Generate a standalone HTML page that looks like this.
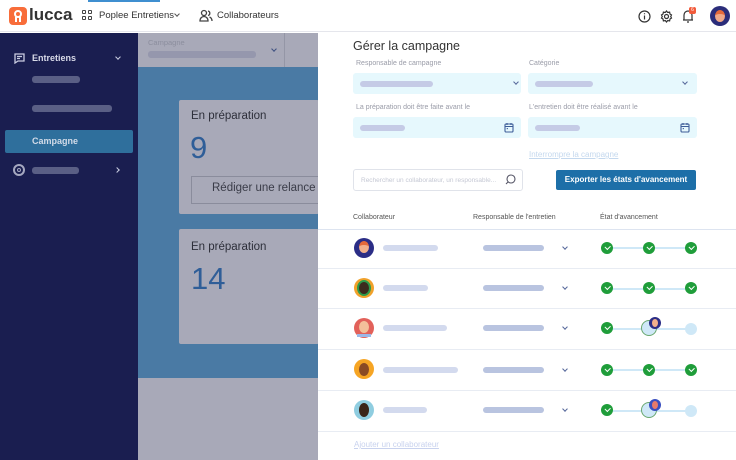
<!DOCTYPE html>
<html><head><meta charset="utf-8"><style>
*{margin:0;padding:0;box-sizing:border-box}
body{width:736px;height:460px;overflow:hidden;position:relative;font-family:"Liberation Sans",sans-serif;background:#fff}
.a{position:absolute}
.bar{position:absolute;border-radius:3px}
.lbl{position:absolute;font-size:7px;color:#9a9ca8}
.fld{position:absolute;background:#e6f8fd;border-radius:3px;height:21px}
.fld .bar{background:#c5cbe6;height:6px;top:8px;left:7px}
.chk{position:absolute;width:12px;height:12px;border-radius:50%;background:#1f9d3a}
.chk:after{content:"";position:absolute;left:3.5px;top:3px;width:4px;height:2.5px;border-left:1.5px solid #fff;border-bottom:1.5px solid #fff;transform:rotate(-45deg)}
.line{position:absolute;height:2px;background:#cfe8f7}
.pend{position:absolute;width:12px;height:12px;border-radius:50%;background:#cfe8f7}
.sep{position:absolute;left:318px;width:418px;height:1px;background:#e8ecf3}
.av{position:absolute;width:20px;height:20px;border-radius:50%}
.cv{position:absolute;width:4px;height:4px;border-right:1.2px solid #55679a;border-bottom:1.2px solid #55679a;transform:rotate(45deg)}
</style></head><body>
<!-- header -->
<div class="a" style="left:0;top:0;width:736px;height:32px;background:#fff;border-bottom:1px solid #e5e6ec"></div>
<div class="a" style="left:88px;top:0;width:72px;height:2px;background:#3f8fd0"></div>
<div class="a" style="left:9px;top:7px;width:18px;height:18px;border-radius:4px;background:#f86d3a"></div>
<div class="a" style="left:14px;top:10px;width:8px;height:8px;border:2px solid #fff;border-radius:50%"></div>
<div class="a" style="left:15px;top:17px;width:2px;height:5px;background:#fff"></div>
<div class="a" style="left:19px;top:17px;width:2px;height:5px;background:#fff"></div>
<div class="a" style="left:29px;top:5px;font-size:17px;font-weight:bold;color:#333">lucca</div>
<div class="a" style="left:82px;top:10px;width:11px;height:11px">
<div class="a" style="left:0;top:0;width:4px;height:4px;border:1.2px solid #444;border-radius:1px"></div>
<div class="a" style="left:6px;top:0;width:4px;height:4px;border:1.2px solid #444;border-radius:1px"></div>
<div class="a" style="left:0;top:6px;width:4px;height:4px;border:1.2px solid #444;border-radius:1px"></div>
<div class="a" style="left:6px;top:6px;width:4px;height:4px;border:1.2px solid #444;border-radius:1px"></div></div>
<div class="a" style="left:99px;top:10px;font-size:9.5px;color:#333">Poplee Entretiens</div>
<div class="cv" style="left:175px;top:12px;border-color:#555"></div>
<svg class="a" style="left:199px;top:9px" width="14" height="13" viewBox="0 0 14 13" fill="none" stroke="#444" stroke-width="1.3"><circle cx="5" cy="4" r="2.5"/><path d="M1 12c0-3 2-4.5 4-4.5s4 1.5 4 4.5z"/><path d="M9 2a2.3 2.3 0 010 4.5M10.5 8c1.5.6 2.5 2 2.5 4"/></svg>
<div class="a" style="left:217px;top:10px;font-size:9.5px;color:#333">Collaborateurs</div>
<svg class="a" style="left:638px;top:10px" width="13" height="13" viewBox="0 0 13 13" fill="none" stroke="#333" stroke-width="1.2"><circle cx="6.5" cy="6.5" r="5.5"/><path d="M6.5 5.5v4M6.5 3.3v1"/></svg>
<svg class="a" style="left:660px;top:10px" width="13" height="13" viewBox="0 0 13 13" fill="none" stroke="#333" stroke-width="1.2"><circle cx="6.5" cy="6.5" r="2"/><path d="M6.5 1l1.2 1.5 1.9-.4.4 1.9L11.5 5l-.8 1.5.8 1.5-1.5 1 -.4 1.9-1.9-.4L6.5 12l-1.2-1.5-1.9.4-.4-1.9L1.5 8l.8-1.5L1.5 5l1.5-1 .4-1.9 1.9.4z"/></svg>
<svg class="a" style="left:682px;top:9px" width="12" height="14" viewBox="0 0 12 14" fill="none" stroke="#333" stroke-width="1.2"><path d="M2 11V6a4 4 0 018 0v5zM1 11h10M5 13h2"/></svg>
<div class="a" style="left:689px;top:7px;width:7px;height:7px;background:#f25a3a;border-radius:2px;color:#fff;font-size:5px;text-align:center;line-height:7px">6</div>
<div class="av" style="left:710px;top:6px;width:20px;height:20px;background:#2b2d7a"><div class="a" style="left:5px;top:4px;width:10px;height:12px;border-radius:50%;background:#f0a888;border-top:4px solid #e5693a"></div></div>
<!-- sidebar -->
<div class="a" style="left:0;top:33px;width:138px;height:427px;background:#1a1e50"></div>
<svg class="a" style="left:14px;top:53px" width="11" height="11" viewBox="0 0 11 11" fill="none" stroke="#c9cce0" stroke-width="1.3"><path d="M1 1h9v7H4l-3 2z"/><path d="M3 3.5h5M3 5.5h3"/></svg>
<div class="a" style="left:32px;top:53px;font-size:9px;font-weight:bold;color:#d8dae8">Entretiens</div>
<div class="cv" style="left:116px;top:55px;border-color:#c9cce0"></div>
<div class="bar" style="left:32px;top:76px;width:48px;height:7px;background:#5a5f85"></div>
<div class="bar" style="left:32px;top:105px;width:80px;height:7px;background:#5a5f85"></div>
<div class="a" style="left:5px;top:130px;width:128px;height:23px;background:#2f6f9c;border-radius:2px"></div>
<div class="a" style="left:32px;top:136px;font-size:9px;font-weight:bold;color:#d3dbe8">Campagne</div>
<div class="a" style="left:13px;top:164px;width:12px;height:12px;border:2px solid #a5a8c0;border-radius:50%"><div class="a" style="left:2px;top:2px;width:4px;height:4px;border:1.5px solid #a5a8c0;border-radius:50%"></div></div>
<div class="bar" style="left:32px;top:167px;width:47px;height:7px;background:#5a5f85"></div>
<div class="cv" style="left:115px;top:168px;border-color:#c9cce0;transform:rotate(-45deg)"></div>
<!-- middle overlay -->
<div class="a" style="left:138px;top:33px;width:180px;height:427px;background:#a8a9b8"></div>
<div class="a" style="left:138px;top:67px;width:180px;height:311px;background:#4a7aa4"></div>
<div class="a" style="left:284px;top:33px;width:1px;height:34px;background:#9496a6"></div>
<div class="a" style="left:148px;top:38px;font-size:7.5px;color:#8c8e9e">Campagne</div>
<div class="bar" style="left:148px;top:51px;width:108px;height:7px;background:#9597ad"></div>
<div class="cv" style="left:272px;top:47px;border-color:#3d5080"></div>
<div class="a" style="left:179px;top:100px;width:140px;height:114px;background:#a8a9b8;border-radius:2px"></div>
<div class="a" style="left:191px;top:110px;font-size:11.5px;color:#2d2f3a">En préparation</div>
<div class="a" style="left:190px;top:130px;font-size:31px;color:#2f5e98;font-weight:300">9</div>
<div class="a" style="left:191px;top:176px;width:130px;height:28px;border:1px solid #8a8c9c"></div>
<div class="a" style="left:212px;top:182px;font-size:11.5px;color:#3a3c48">Rédiger une relance</div>
<div class="a" style="left:179px;top:229px;width:140px;height:115px;background:#a8a9b8;border-radius:2px"></div>
<div class="a" style="left:191px;top:241px;font-size:11.5px;color:#2d2f3a">En préparation</div>
<div class="a" style="left:191px;top:261px;font-size:31px;color:#2f5e98">14</div>
<!-- panel -->
<div class="a" style="left:318px;top:33px;width:418px;height:427px;background:#fff"></div>
<div class="a" style="left:353px;top:39px;font-size:12.5px;color:#333">Gérer la campagne</div>
<div class="lbl" style="left:356px;top:60px">Responsable de campagne</div>
<div class="lbl" style="left:529px;top:60px">Catégorie</div>
<div class="fld" style="left:353px;top:73px;width:168px"><div class="bar" style="width:73px"></div><div class="cv" style="left:161px;top:7px"></div></div>
<div class="fld" style="left:528px;top:73px;width:169px"><div class="bar" style="width:58px"></div><div class="cv" style="left:155px;top:7px"></div></div>
<div class="lbl" style="left:356px;top:104px">La préparation doit être faite avant le</div>
<div class="lbl" style="left:529px;top:104px">L'entretien doit être réalisé avant le</div>
<div class="fld" style="left:353px;top:117px;width:168px"><div class="bar" style="width:45px"></div></div>
<div class="fld" style="left:528px;top:117px;width:169px"><div class="bar" style="width:45px"></div></div>
<svg class="a" style="left:504px;top:122px" width="10" height="11" viewBox="0 0 10 11" fill="none" stroke="#3d5d98" stroke-width="1.1"><rect x="1" y="2" width="8" height="8" rx="1"/><path d="M1 4.5h8M3 1v2M7 1v2"/><rect x="2.7" y="6" width="1.2" height="1.2" fill="#3d5d98" stroke="none"/></svg>
<svg class="a" style="left:680px;top:122px" width="10" height="11" viewBox="0 0 10 11" fill="none" stroke="#3d5d98" stroke-width="1.1"><rect x="1" y="2" width="8" height="8" rx="1"/><path d="M1 4.5h8M3 1v2M7 1v2"/><rect x="2.7" y="6" width="1.2" height="1.2" fill="#3d5d98" stroke="none"/></svg>
<div class="a" style="left:529px;top:150px;font-size:8px;color:#c4d8ee;text-decoration:underline">Interrompre la campagne</div>
<div class="a" style="left:353px;top:169px;width:170px;height:22px;border:1px solid #e0e3ea;border-radius:3px"></div>
<div class="a" style="left:361px;top:177px;font-size:6.5px;color:#c5c8d4">Rechercher un collaborateur, un responsable...</div>
<svg class="a" style="left:505px;top:174px" width="11" height="11" viewBox="0 0 11 11" fill="none" stroke="#556" stroke-width="1.1"><circle cx="6" cy="5" r="4"/><path d="M3 8l-2 2"/></svg>
<div class="a" style="left:556px;top:170px;width:140px;height:20px;background:#1d6fa8;border-radius:2px;color:#fff;font-size:8px;font-weight:bold;text-align:center;line-height:20px">Exporter les états d'avancement</div>
<div class="a" style="left:353px;top:214px;font-size:7px;color:#555">Collaborateur</div>
<div class="a" style="left:473px;top:214px;font-size:7px;color:#555">Responsable de l'entretien</div>
<div class="a" style="left:600px;top:214px;font-size:7px;color:#555">État d'avancement</div>
<div class="sep" style="top:229px;background:#dde4f0"></div>
<div class="sep" style="top:268px"></div><div class="sep" style="top:308px"></div><div class="sep" style="top:349px"></div><div class="sep" style="top:390px"></div><div class="sep" style="top:431px"></div>

<!-- rows -->
<div class="av" style="left:354px;top:238px;background:#2b2d86"><div class="a" style="left:5px;top:3px;width:10px;height:12px;border-radius:50%;background:#f2b08c;border-top:4px solid #e5693a"></div></div>
<div class="av" style="left:354px;top:278px;background:#f0a12a"><div class="a" style="left:3px;top:2px;width:14px;height:16px;border-radius:50%;background:#3b2a1e;border:2px solid #2c9a4a"></div></div>
<div class="av" style="left:354px;top:318px;background:#e2615a"><div class="a" style="left:5px;top:3px;width:10px;height:12px;border-radius:50%;background:#f3c09a"></div><div class="a" style="left:3px;top:16px;width:14px;height:3px;background:#9bb8e8"></div></div>
<div class="av" style="left:354px;top:359px;background:#f6a524"><div class="a" style="left:5px;top:4px;width:10px;height:13px;border-radius:50%;background:#8a4a24"></div></div>
<div class="av" style="left:354px;top:400px;background:#8fcde0"><div class="a" style="left:5px;top:3px;width:10px;height:14px;border-radius:50%;background:#3a2418"></div></div>

<div class="bar" style="left:383px;top:245px;width:55px;height:6px;background:#d3daee"></div>
<div class="bar" style="left:383px;top:285px;width:45px;height:6px;background:#d3daee"></div>
<div class="bar" style="left:383px;top:325px;width:64px;height:6px;background:#d3daee"></div>
<div class="bar" style="left:383px;top:367px;width:75px;height:6px;background:#d3daee"></div>
<div class="bar" style="left:383px;top:407px;width:44px;height:6px;background:#d3daee"></div>

<div class="bar" style="left:483px;top:245px;width:61px;height:6px;background:#b9c4e0"></div>
<div class="bar" style="left:483px;top:285px;width:61px;height:6px;background:#b9c4e0"></div>
<div class="bar" style="left:483px;top:325px;width:61px;height:6px;background:#b9c4e0"></div>
<div class="bar" style="left:483px;top:367px;width:61px;height:6px;background:#b9c4e0"></div>
<div class="bar" style="left:483px;top:407px;width:61px;height:6px;background:#b9c4e0"></div>
<div class="cv" style="left:563px;top:245px"></div>
<div class="cv" style="left:563px;top:285px"></div>
<div class="cv" style="left:563px;top:325px"></div>
<div class="cv" style="left:563px;top:367px"></div>
<div class="cv" style="left:563px;top:407px"></div>

<div class="line" style="left:607px;top:247px;width:85px"></div>
<div class="chk" style="left:601px;top:242px"></div><div class="chk" style="left:643px;top:242px"></div><div class="chk" style="left:685px;top:242px"></div>
<div class="line" style="left:607px;top:288px;width:85px"></div>
<div class="chk" style="left:601px;top:282px"></div><div class="chk" style="left:643px;top:282px"></div><div class="chk" style="left:685px;top:282px"></div>
<div class="line" style="left:607px;top:369px;width:85px"></div>
<div class="chk" style="left:601px;top:364px"></div><div class="chk" style="left:643px;top:364px"></div><div class="chk" style="left:685px;top:364px"></div>

<div class="line" style="left:607px;top:328px;width:85px"></div>
<div class="chk" style="left:601px;top:322px"></div>
<div class="a" style="left:641px;top:320px;width:16px;height:16px;border-radius:50%;background:#cfe8f7;border:1px solid #6aa870"></div>
<div class="av" style="left:649px;top:317px;width:12px;height:12px;background:#2b2d86"><div class="a" style="left:3px;top:2px;width:6px;height:8px;border-radius:50%;background:#f2b08c"></div></div>
<div class="pend" style="left:685px;top:323px"></div>

<div class="line" style="left:607px;top:410px;width:85px"></div>
<div class="chk" style="left:601px;top:404px"></div>
<div class="a" style="left:641px;top:402px;width:16px;height:16px;border-radius:50%;background:#cfe8f7;border:1px solid #6aa870"></div>
<div class="av" style="left:649px;top:399px;width:12px;height:12px;background:#3a4fc0"><div class="a" style="left:3px;top:2px;width:6px;height:8px;border-radius:50%;background:#e87a6a"></div></div>
<div class="pend" style="left:685px;top:405px"></div>

<div class="a" style="left:354px;top:440px;font-size:8px;color:#c8d2ee;text-decoration:underline">Ajouter un collaborateur</div>
</body></html>
